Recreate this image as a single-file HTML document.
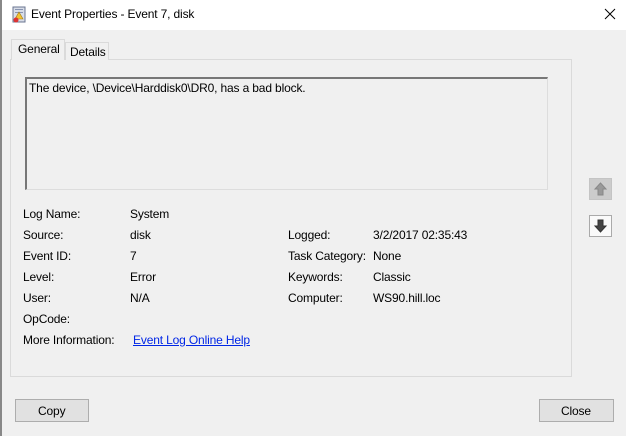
<!DOCTYPE html><html><head><style>
*{margin:0;padding:0;box-sizing:border-box}
body{width:626px;height:436px;background:#f0f0f0;font-family:"Liberation Sans",sans-serif;font-size:12px;color:#000;position:relative;overflow:hidden}
.a{position:absolute}
.lb{position:absolute;white-space:nowrap;letter-spacing:-0.15px}
</style></head><body>
<div class="a" style="left:0;top:0;width:626px;height:30px;background:#fff"></div>
<div class="a" style="left:0;top:0;width:2px;height:436px;background:#888"></div>
<svg class="a" style="left:11px;top:6px" width="16" height="18" viewBox="0 0 16 18"><rect x="2" y="1" width="12" height="15" fill="#d8dde8" stroke="#6a7590"/><rect x="4" y="3" width="8" height="1" fill="#8894b0"/><rect x="4" y="6" width="8" height="1" fill="#8894b0"/><path d="M8 6 L12 13 L4 13Z" fill="#f2c233" stroke="#a07a10" stroke-width=".6"/><circle cx="5" cy="14" r="2.5" fill="#d33"/></svg>
<div class="lb" style="left:31px;top:7px;font-size:12px">Event Properties - Event 7, disk</div>
<svg class="a" style="left:604px;top:8px" width="12" height="12"><path d="M1 1L11 11M11 1L1 11" stroke="#000" stroke-width="1"/></svg>
<div class="a" style="left:10px;top:59px;width:562px;height:318px;border:1px solid #dadada;background:#f0f0f0"></div>
<div class="a" style="left:11px;top:39px;width:54px;height:21px;background:#f0f0f0;border:1px solid #dadada;border-bottom:none"></div>
<div class="lb" style="left:18px;top:42px">General</div>
<div class="a" style="left:65px;top:42px;width:44px;height:18px;border:1px solid #dadada;border-bottom:none;background:#f0f0f0"></div>
<div class="lb" style="left:70px;top:45px">Details</div>
<div class="a" style="left:25px;top:77px;width:523px;height:113px;border:1px solid #ddd;border-left:2px solid #777;border-top:2px solid #777;background:#f0f0f0"></div>
<div class="lb" style="left:29px;top:81px">The device, \Device\Harddisk0\DR0, has a bad block.</div>
<div class="lb" style="left:23px;top:207px">Log Name:</div><div class="lb" style="left:130px;top:207px">System</div>
<div class="lb" style="left:23px;top:228px">Source:</div><div class="lb" style="left:130px;top:228px">disk</div>
<div class="lb" style="left:288px;top:228px">Logged:</div><div class="lb" style="left:373px;top:228px">3/2/2017 02:35:43</div>
<div class="lb" style="left:23px;top:249px">Event ID:</div><div class="lb" style="left:130px;top:249px">7</div>
<div class="lb" style="left:288px;top:249px">Task Category:</div><div class="lb" style="left:373px;top:249px">None</div>
<div class="lb" style="left:23px;top:270px">Level:</div><div class="lb" style="left:130px;top:270px">Error</div>
<div class="lb" style="left:288px;top:270px">Keywords:</div><div class="lb" style="left:373px;top:270px">Classic</div>
<div class="lb" style="left:23px;top:291px">User:</div><div class="lb" style="left:130px;top:291px">N/A</div>
<div class="lb" style="left:288px;top:291px">Computer:</div><div class="lb" style="left:373px;top:291px">WS90.hill.loc</div>
<div class="lb" style="left:23px;top:312px">OpCode:</div>
<div class="lb" style="left:23px;top:333px">More Information:</div><div class="lb" style="left:133px;top:333px;color:#0026e6;text-decoration:underline">Event Log Online Help</div>
<div class="a" style="left:589px;top:178px;width:23px;height:22px;background:#ccc;border:1px solid #c4c4c4"></div>
<svg class="a" style="left:593px;top:181px" width="15" height="16"><path d="M7.5 2L13 8H10V14H5V8H2Z" fill="#999" stroke="#888"/></svg>
<div class="a" style="left:589px;top:215px;width:23px;height:22px;background:#fafafa;border:1px solid #aaa"></div>
<svg class="a" style="left:593px;top:218px" width="15" height="16"><path d="M5 2H10V8H13L7.5 14L2 8H5Z" fill="#444" stroke="#333"/></svg>
<div class="a" style="left:15px;top:399px;width:74px;height:23px;background:#e1e1e1;border:1px solid #adadad"></div>
<div class="lb" style="left:38px;top:404px">Copy</div>
<div class="a" style="left:539px;top:399px;width:75px;height:23px;background:#e1e1e1;border:1px solid #adadad"></div>
<div class="lb" style="left:561px;top:404px">Close</div>
</body></html>
